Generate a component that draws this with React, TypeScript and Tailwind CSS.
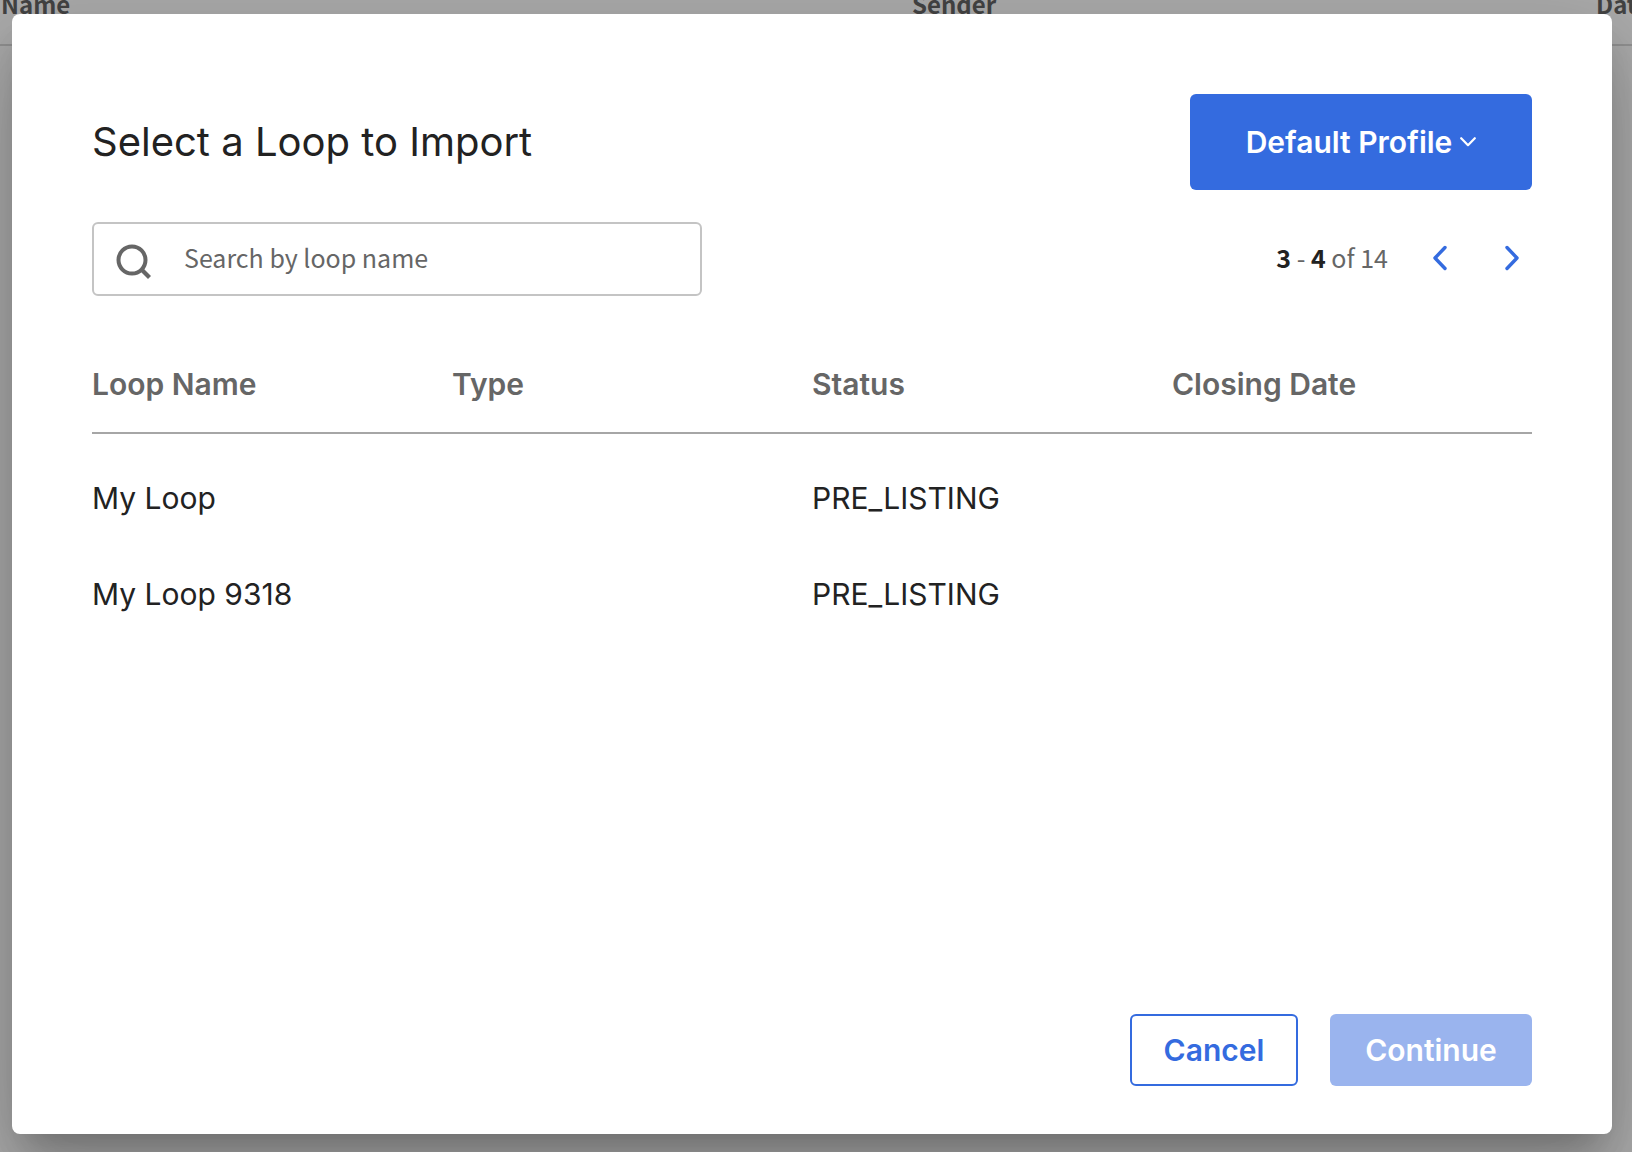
import React from "react";

const loops = [
  { name: "My Loop", type: "", status: "PRE_LISTING", closing: "" },
  { name: "My Loop 9318", type: "", status: "PRE_LISTING", closing: "" },
];

const columns = ["Loop Name", "Type", "Status", "Closing Date"];

function SearchIcon() {
  return (
    <svg viewBox="0 0 36 36" fill="none" stroke="#666" strokeLinecap="butt" className="mt-1.5 size-9 shrink-0" aria-hidden="true">
      <circle cx="16" cy="16" r="13.5" strokeWidth="4" />
      <path d="M25 25 L33.5 33.5" strokeWidth="4.2" />
    </svg>
  );
}

function Chevron({ d }: { d: string }) {
  return (
    <svg viewBox="0 0 16 26" fill="none" stroke="#346bdf" strokeWidth="3.4" strokeLinecap="round" strokeLinejoin="round" className="h-[26px] w-4" aria-hidden="true">
      <path d={d} />
    </svg>
  );
}

function PageBehind() {
  return (
    <div className="-mt-4 flex h-[62px] border-b-2 border-[#939393] font-['Noto_Sans_CJK_JP',sans-serif] text-2xl leading-10 font-bold text-[#444]">
      <div className="w-[912px] shrink-0 pl-px">Name</div>
      <div className="w-[684px] shrink-0">Sender</div>
      <div className="shrink-0">Date</div>
    </div>
  );
}

export default function App() {
  return (
    <div className="relative min-h-screen overflow-hidden bg-[#adadad] font-[Inter,sans-serif]">
      <div className="absolute inset-x-0 top-0 overflow-hidden">
        <PageBehind />
      </div>
      <div className="relative flex min-h-screen pt-3.5 pr-5 pb-[18px] pl-3">
        <div
          role="dialog"
          aria-labelledby="dialog-title"
          className="flex flex-1 flex-col rounded-lg bg-white px-20 pt-20 pb-12 text-[#222] shadow-[0_22px_30px_-14px_rgba(0,0,0,0.2),0_48px_76px_6px_rgba(0,0,0,0.14),0_18px_92px_16px_rgba(0,0,0,0.12)]"
        >
          <div className="flex items-center justify-between">
            <h1 id="dialog-title" className="text-[40px] leading-12 font-normal">
              Select a Loop to Import
            </h1>
            <button type="button" className="flex h-24 w-[342px] items-center justify-center gap-2 rounded-md bg-[#346bdf] text-[30px] font-semibold text-white">
              Default Profile
              <svg viewBox="0 0 16 10" fill="none" stroke="white" strokeWidth="2.2" strokeLinecap="round" strokeLinejoin="round" className="h-2.5 w-4" aria-hidden="true">
                <path d="M1.2 1.2 L8 8.2 L14.8 1.2" />
              </svg>
            </button>
          </div>

          <div className="mt-8 flex items-center justify-between font-['Noto_Sans_CJK_JP',sans-serif]">
            <label className="flex h-[74px] w-[610px] items-center gap-8 rounded-md border-2 border-[#c4c4c4] pl-[22px]">
              <SearchIcon />
              <input
                type="text"
                aria-label="Search by loop name"
                placeholder="Search by loop name"
                className="h-full min-w-0 flex-1 bg-transparent pb-1 text-[25px] outline-none placeholder:text-[#666]"
              />
            </label>
            <div className="flex items-center pr-3">
              <p className="pb-1 text-[25px] leading-9 text-[#666]">
                <b className="text-[#222]">3</b> - <b className="text-[#222]">4</b> of 14
              </p>
              <button type="button" aria-label="Previous page" className="ml-11 pb-0.5">
                <Chevron d="M13 2.5 L3 13 L13 23.5" />
              </button>
              <button type="button" aria-label="Next page" className="ml-14 pb-0.5">
                <Chevron d="M3 2.5 L13 13 L3 23.5" />
              </button>
            </div>
          </div>

          <table className="mt-10 w-full table-fixed border-collapse text-left text-[30px]">
            <thead>
              <tr className="h-[97px] border-b-2 border-[#a6a6a6] text-[#666]">
                {columns.map((c) => (
                  <th key={c} className="font-semibold">{c}</th>
                ))}
              </tr>
            </thead>
            <tbody>
              <tr className="h-[17px]" aria-hidden="true">
                <td colSpan={4} />
              </tr>
              {loops.map((l) => (
                <tr key={l.name} className="h-24">
                  <td>{l.name}</td>
                  <td>{l.type}</td>
                  <td>{l.status}</td>
                  <td>{l.closing}</td>
                </tr>
              ))}
            </tbody>
          </table>

          <div className="mt-auto flex justify-end gap-8 text-[30px] font-semibold">
            <button type="button" className="h-[72px] w-[168px] rounded-md border-2 border-[#346bdf] text-[#346bdf]">
              Cancel
            </button>
            <button type="button" disabled className="h-[72px] w-[202px] rounded-md bg-[#9ab4ee] text-white">
              Continue
            </button>
          </div>
        </div>
      </div>
    </div>
  );
}
